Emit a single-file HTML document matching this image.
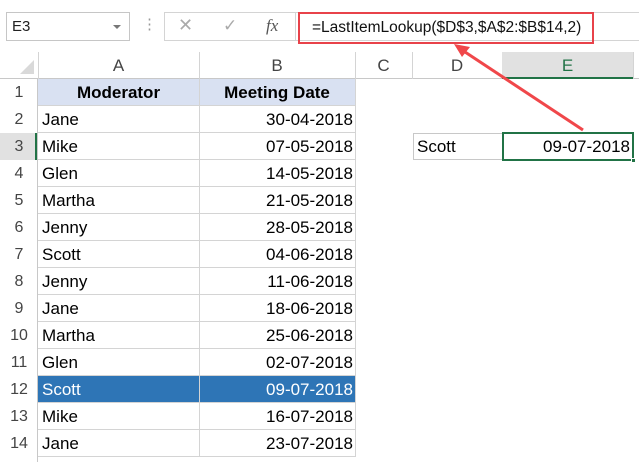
<!DOCTYPE html>
<html><head><style>
body{margin:0;width:639px;height:462px;background:#fff;position:relative;overflow:hidden;font-family:"Liberation Sans",sans-serif}
.a{position:absolute;box-sizing:border-box}
.t{position:absolute;font-size:17px;line-height:27px;color:#000;white-space:nowrap}
.rn{position:absolute;left:0;width:38px;text-align:center;font-size:16px;line-height:27px;color:#444}
</style></head><body>
<div class="a" style="left:6px;top:12px;width:124px;height:29px;border:1px solid #c6c6c6;background:#fff"></div>
<div class="t" style="left:12px;top:13px;font-size:15px;color:#222">E3</div>
<div class="a" style="left:113px;top:25px;width:0;height:0;border-left:4px solid transparent;border-right:4px solid transparent;border-top:4px solid #777"></div>
<div class="t" style="left:142px;top:11px;font-size:15px;color:#999">⋮</div>
<div class="a" style="left:164px;top:12px;width:132px;height:29px;border:1px solid #d4d4d4"></div>
<div class="t" style="left:178px;top:12px;font-size:18px;color:#aaa">✕</div>
<div class="t" style="left:223px;top:12px;font-size:17px;color:#aaa">✓</div>
<div class="t" style="left:266px;top:12px;font-size:17px;color:#555;font-family:'Liberation Serif',serif;font-style:italic">fx</div>
<div class="a" style="left:294px;top:12px;width:345px;height:29px;border-top:1px solid #d4d4d4;border-bottom:1px solid #d4d4d4"></div>
<div class="a" style="left:298px;top:12px;width:296px;height:32px;border:2px solid #e8424a"></div>
<div class="t" style="left:312px;top:14px;font-size:15.5px;color:#111">=LastItemLookup($D$3,$A$2:$B$14,2)</div>
<div class="a" style="left:0;top:52px;width:639px;height:27px;background:#fff;border-bottom:1px solid #c8c8c8"></div>
<div class="a" style="left:20px;top:60px;width:0;height:0;border-left:14px solid transparent;border-bottom:14px solid #d9d9d9"></div>
<div class="a" style="left:38px;top:52px;width:1px;height:27px;background:#d4d4d4"></div>
<div class="a" style="left:199px;top:52px;width:1px;height:27px;background:#d4d4d4"></div>
<div class="a" style="left:355px;top:52px;width:1px;height:27px;background:#d4d4d4"></div>
<div class="a" style="left:412px;top:52px;width:1px;height:27px;background:#d4d4d4"></div>
<div class="a" style="left:502px;top:52px;width:131px;height:27px;background:#e1e1e1;border-bottom:2px solid #217346"></div>
<div class="a" style="left:633px;top:52px;width:1px;height:27px;background:#d4d4d4"></div>
<div class="t" style="left:38px;top:52px;width:161px;text-align:center;font-size:17px;color:#444">A</div>
<div class="t" style="left:199px;top:52px;width:156px;text-align:center;font-size:17px;color:#444">B</div>
<div class="t" style="left:355px;top:52px;width:57px;text-align:center;font-size:17px;color:#444">C</div>
<div class="t" style="left:412px;top:52px;width:90px;text-align:center;font-size:17px;color:#444">D</div>
<div class="t" style="left:502px;top:52px;width:131px;text-align:center;font-size:17px;color:#217346">E</div>
<div class="a" style="left:37px;top:79px;width:1px;height:383px;background:#c8c8c8"></div>
<div class="a" style="left:0;top:133px;width:37px;height:27px;background:#e1e1e1;border-right:2px solid #217346"></div>
<div class="a" style="left:38px;top:79px;width:317px;height:27px;background:#d9e1f2"></div>
<div class="t" style="left:38px;top:79px;width:161px;text-align:center;font-weight:bold">Moderator</div>
<div class="t" style="left:199px;top:79px;width:156px;text-align:center;font-weight:bold">Meeting Date</div>
<div class="a" style="left:38px;top:376px;width:317px;height:27px;background:#2e75b6"></div>
<div class="a" style="left:199px;top:79px;width:1px;height:378px;background:#d4d4d4"></div>
<div class="a" style="left:355px;top:79px;width:1px;height:378px;background:#d4d4d4"></div>
<div class="rn" style="top:79px">1</div><div class="rn" style="top:106px">2</div><div class="rn" style="top:133px">3</div><div class="rn" style="top:160px">4</div><div class="rn" style="top:187px">5</div><div class="rn" style="top:214px">6</div><div class="rn" style="top:241px">7</div><div class="rn" style="top:268px">8</div><div class="rn" style="top:295px">9</div><div class="rn" style="top:322px">10</div><div class="rn" style="top:349px">11</div><div class="rn" style="top:376px">12</div><div class="rn" style="top:403px">13</div><div class="rn" style="top:430px">14</div>
<div class="a" style="left:38px;top:105px;width:318px;height:1px;background:#d4d4d4;box-shadow:0 27px #d4d4d4,0 54px #d4d4d4,0 81px #d4d4d4,0 108px #d4d4d4,0 135px #d4d4d4,0 162px #d4d4d4,0 189px #d4d4d4,0 216px #d4d4d4,0 243px #d4d4d4,0 270px #d4d4d4,0 297px #d4d4d4,0 324px #d4d4d4,0 351px #d4d4d4"></div>
<div class="t" style="left:42px;top:106px">Jane</div><div class="t" style="right:286px;top:106px">30-04-2018</div>
<div class="t" style="left:42px;top:133px">Mike</div><div class="t" style="right:286px;top:133px">07-05-2018</div>
<div class="t" style="left:42px;top:160px">Glen</div><div class="t" style="right:286px;top:160px">14-05-2018</div>
<div class="t" style="left:42px;top:187px">Martha</div><div class="t" style="right:286px;top:187px">21-05-2018</div>
<div class="t" style="left:42px;top:214px">Jenny</div><div class="t" style="right:286px;top:214px">28-05-2018</div>
<div class="t" style="left:42px;top:241px">Scott</div><div class="t" style="right:286px;top:241px">04-06-2018</div>
<div class="t" style="left:42px;top:268px">Jenny</div><div class="t" style="right:286px;top:268px">11-06-2018</div>
<div class="t" style="left:42px;top:295px">Jane</div><div class="t" style="right:286px;top:295px">18-06-2018</div>
<div class="t" style="left:42px;top:322px">Martha</div><div class="t" style="right:286px;top:322px">25-06-2018</div>
<div class="t" style="left:42px;top:349px">Glen</div><div class="t" style="right:286px;top:349px">02-07-2018</div>
<div class="t" style="left:42px;top:376px;color:#fff">Scott</div><div class="t" style="right:286px;top:376px;color:#fff">09-07-2018</div>
<div class="t" style="left:42px;top:403px">Mike</div><div class="t" style="right:286px;top:403px">16-07-2018</div>
<div class="t" style="left:42px;top:430px">Jane</div><div class="t" style="right:286px;top:430px">23-07-2018</div>
<div class="a" style="left:413px;top:133px;width:90px;height:27px;border:1px solid #c8c8c8"></div>
<div class="t" style="left:417px;top:133px">Scott</div>
<div class="a" style="left:502px;top:132px;width:132px;height:29px;border:2px solid #217346"></div>
<div class="a" style="left:631px;top:158px;width:5px;height:5px;background:#217346;border:1px solid #fff"></div>
<div class="t" style="right:9px;top:133px">09-07-2018</div>
<svg class="a" style="left:0;top:0" width="639" height="462">
<line x1="583" y1="130" x2="462" y2="50" stroke="#f0474a" stroke-width="3"/>
<polygon points="454,44 470,47 462,57" fill="#f0474a"/>
</svg>
</body></html>
